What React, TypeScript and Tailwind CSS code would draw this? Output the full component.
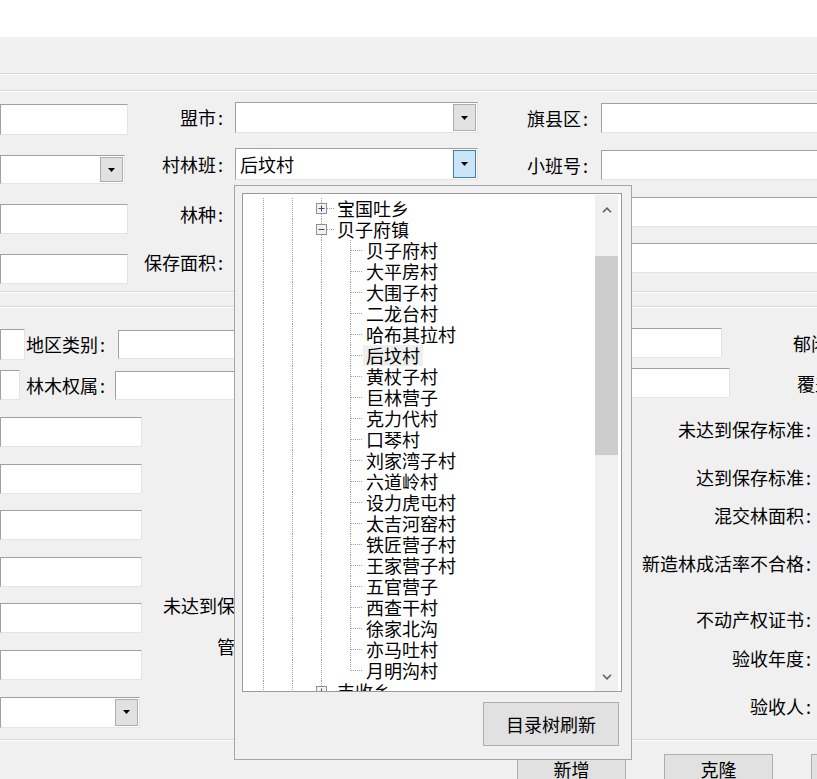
import React from 'react';

const FONT = "font-['Noto_Sans_CJK_SC','Noto_Sans',sans-serif]";

function Input({ className = '' }: { className?: string }) {
  return (
    <div
      className={`shrink-0 bg-white border border-t-[#a0a0a0] border-l-[#a0a0a0] border-r-[#e4e4e4] border-b-[#e4e4e4] ${className}`}
    />
  );
}

function Arrow() {
  return (
    <svg width="7" height="4" viewBox="0 0 7 4" className="block">
      <path d="M0 0H7L3.5 4Z" fill="#000" />
    </svg>
  );
}

function Combo({ className = '', text = '', active = false }: { className?: string; text?: string; active?: boolean }) {
  return (
    <div
      className={`shrink-0 flex items-stretch bg-white border border-t-[#a0a0a0] border-l-[#a0a0a0] border-r-[#e4e4e4] border-b-[#e4e4e4] ${className}`}
    >
      <div className="flex-1 flex items-center pl-[4px] whitespace-nowrap overflow-hidden">{text}</div>
      <div
        className={`w-[23px] my-[1px] mr-[1px] flex items-center justify-center border ${
          active ? 'bg-[#cce4f7] border-[#3c7fb1]' : 'bg-[#e1e1e1] border-[#adadad]'
        }`}
      >
        <Arrow />
      </div>
    </div>
  );
}

function Label({ className = '', t = '' }: { className?: string; t?: string }) {
  const hasColon = t.endsWith(':');
  return (
    <div className={`shrink-0 whitespace-nowrap leading-[21px] ${className}`}>
      {hasColon ? t.slice(0, -1) : t}
      {hasColon && <span className="ml-[2px]">:</span>}
    </div>
  );
}

function Sep() {
  return <div className="h-[2px] border-t border-t-[#d9d9d9] border-b border-b-white" />;
}

function Btn({ className = '', children }: { className?: string; children?: React.ReactNode }) {
  return (
    <div
      className={`shrink-0 flex items-center justify-center bg-[#e1e1e1] border border-[#adadad] whitespace-nowrap ${className}`}
    >
      {children}
    </div>
  );
}

function Guide() {
  return (
    <svg width="29" height="21" className="block shrink-0">
      <line x1="20.5" y1="0" x2="20.5" y2="21" stroke="#a0a0a0" strokeDasharray="1 1" />
    </svg>
  );
}

type Kind = 'plus' | 'minus' | 'leaf';

function Own({ kind, last }: { kind: Kind; last?: boolean }) {
  return (
    <svg width="36" height="21" className="block shrink-0">
      <line x1="20.5" y1="0" x2="20.5" y2={last ? 10.5 : 21} stroke="#a0a0a0" strokeDasharray="1 1" />
      <line
        x1={kind === 'leaf' ? 21 : 26}
        y1="10.5"
        x2="33"
        y2="10.5"
        stroke="#a0a0a0"
        strokeDasharray="1 1"
      />
      {kind !== 'leaf' && (
        <g>
          <rect x="15.5" y="5.5" width="10" height="10" fill="#f2f2f2" stroke="#919191" />
          <line x1="17.5" y1="10.5" x2="23.5" y2="10.5" stroke="#2d4f9a" />
          {kind === 'plus' && <line x1="20.5" y1="7.5" x2="20.5" y2="13.5" stroke="#2d4f9a" />}
        </g>
      )}
    </svg>
  );
}

type Row = { t: string; lv: number; k: Kind; last?: boolean; sel?: boolean };

const villages = [
  '贝子府村',
  '大平房村',
  '大围子村',
  '二龙台村',
  '哈布其拉村',
  '后坟村',
  '黄杖子村',
  '巨林营子',
  '克力代村',
  '口琴村',
  '刘家湾子村',
  '六道岭村',
  '设力虎屯村',
  '太吉河窑村',
  '铁匠营子村',
  '王家营子村',
  '五官营子',
  '西查干村',
  '徐家北沟',
  '亦马吐村',
  '月明沟村',
];

const rows: Row[] = [
  { t: '宝国吐乡', lv: 2, k: 'plus' },
  { t: '贝子府镇', lv: 2, k: 'minus' },
  ...villages.map((v, i) => ({
    t: v,
    lv: 3,
    k: 'leaf' as Kind,
    last: i === villages.length - 1,
    sel: v === '后坟村',
  })),
  { t: '丰收乡', lv: 2, k: 'plus' },
];

function Chevron({ up }: { up?: boolean }) {
  return (
    <svg width="10" height="6" viewBox="0 0 10 6" className="block">
      <path
        d={up ? 'M1 5.2L5 1.2L9 5.2' : 'M1 0.8L5 4.8L9 0.8'}
        stroke="#606060"
        strokeWidth="1.6"
        fill="none"
      />
    </svg>
  );
}

function Popup() {
  return (
    <div className="absolute left-[234px] top-[185px] w-[398px] h-[575px] border border-[#a6a6a6] bg-[#f0f0f0] flex flex-col">
      <div className="mt-[7px] ml-[7px] w-[380px] h-[499px] shrink-0 border border-[#9a9a9a] bg-white flex overflow-hidden">
        <div className="flex-1 overflow-hidden pt-[3.5px]">
          {rows.map((r, i) => (
            <div key={i} className="flex h-[21px] items-center">
              {Array.from({ length: r.lv }).map((_, j) => (
                <Guide key={j} />
              ))}
              <Own kind={r.k} last={r.last} />
              <span
                className={`whitespace-nowrap leading-[21px] ${
                  r.sel ? 'bg-[#efefef] -ml-[3px] px-[3px]' : ''
                }`}
              >
                {r.t}
              </span>
            </div>
          ))}
        </div>
        <div className="w-[23px] shrink-0 mr-[3px] mt-[1px] bg-[#f0f0f0] flex flex-col">
          <div className="h-[30px] flex items-center justify-center">
            <Chevron up />
          </div>
          <div className="h-[31px]" />
          <div className="h-[199px] bg-[#cdcdcd]" />
          <div className="flex-1" />
          <div className="h-[28px] flex items-center justify-center">
            <Chevron />
          </div>
        </div>
      </div>
      <Btn className="self-end mt-[10px] mr-[12px] w-[136px] h-[44px]">目录树刷新</Btn>
    </div>
  );
}

export default function App() {
  return (
    <div
      className={`relative w-[817px] h-[779px] overflow-hidden bg-[#f0f0f0] text-black text-[18px] leading-[21px] ${FONT}`}
    >
      <div className="h-[37px] bg-white" />
      <div className="h-[36px]" />
      <Sep />
      <div className="h-[15px]" />
      <Sep />

      {/* section 1 */}
      <div className="flex h-[199px]">
        <div className="w-[128px] shrink-0 flex flex-col pt-[12px] gap-[20px]">
          <Input className="w-[128px] h-[31px]" />
          <Combo className="w-[125px] h-[29px]" />
          <Input className="w-[128px] h-[30px]" />
          <Input className="w-[128px] h-[30px]" />
        </div>
        <div className="w-[349px] shrink-0 flex flex-col">
          <div className="mt-[10px] h-[31px] flex items-center">
            <Label className="w-[95px] text-right" t="盟市:" />
            <Combo className="ml-[12px] w-[243px] h-full" />
          </div>
          <div className="mt-[15px] h-[32px] flex items-center">
            <Label className="w-[95px] text-right" t="村林班:" />
            <Combo className="ml-[12px] w-[243px] h-full" text="后坟村" active />
          </div>
          <div className="mt-[19px] h-[30px] flex items-center">
            <Label className="w-[95px] text-right" t="林种:" />
            <Combo className="ml-[12px] w-[243px] h-full" />
          </div>
          <div className="mt-[18px] h-[30px] flex items-center">
            <Label className="w-[95px] text-right" t="保存面积:" />
            <Input className="ml-[12px] w-[243px] h-full" />
          </div>
        </div>
        <div className="flex-1 min-w-0 flex flex-col">
          <div className="mt-[11px] h-[30px] flex items-center">
            <Label className="w-[111px] text-right" t="旗县区:" />
            <Input className="ml-[13px] w-[300px] h-full" />
          </div>
          <div className="mt-[17px] h-[30px] flex items-center">
            <Label className="w-[111px] text-right" t="小班号:" />
            <Input className="ml-[13px] w-[300px] h-full" />
          </div>
          <div className="mt-[17px] h-[30px] flex items-center">
            <Label className="w-[111px] text-right" />
            <Input className="ml-[13px] w-[300px] h-full" />
          </div>
          <div className="mt-[16px] h-[30px] flex items-center">
            <Label className="w-[111px] text-right" />
            <Input className="ml-[13px] w-[300px] h-full" />
          </div>
        </div>
      </div>

      <Sep />
      <div className="h-[13px]" />
      <Sep />

      {/* section 2 */}
      <div className="flex h-[431px]">
        <div className="w-[142px] shrink-0 flex flex-col pt-[21px]">
          <div className="w-[260px] h-[31px] flex items-center">
            <Input className="w-[25px] h-full" />
            <Label className="ml-[1px] w-[80px]" t="地区类别:" />
            <Input className="ml-[12px] w-[200px] h-[29px]" />
          </div>
          <div className="mt-[10px] w-[260px] h-[30px] flex items-center">
            <Input className="w-[20px] h-full" />
            <Label className="ml-[6px] w-[80px]" t="林木权属:" />
            <Input className="ml-[9px] w-[200px] h-[29px]" />
          </div>
          <div className="mt-[17px] flex flex-col gap-[16.6px]">
            <Input className="w-[142px] h-[30px]" />
            <Input className="w-[142px] h-[30px]" />
            <Input className="w-[142px] h-[30px]" />
            <Input className="w-[142px] h-[30px]" />
            <Input className="w-[142px] h-[30px]" />
            <Input className="w-[142px] h-[30px]" />
            <Combo className="w-[140px] h-[31px]" />
          </div>
        </div>
        <div className="w-[154px] shrink-0 flex flex-col items-end pt-[286.5px]">
          <Label t="未达到保存标准:" />
          <Label className="mt-[20px]" t="管护单位:" />
        </div>
        <div className="flex-1 min-w-0 flex flex-col">
          <div className="mt-[20px] h-[30px] flex items-center">
            <Input className="ml-[264px] w-[162px] h-full" />
            <Label className="ml-[71px]" t="郁闭度:" />
          </div>
          <div className="mt-[10px] h-[30px] flex items-center">
            <Input className="ml-[264px] w-[170px] h-full" />
            <Label className="ml-[67px]" t="覆盖度:" />
          </div>
          <div className="flex flex-col items-end pr-[6px]">
            <Label className="mt-[20.5px]" t="未达到保存标准:" />
            <Label className="mt-[27px]" t="达到保存标准:" />
            <Label className="mt-[17px]" t="混交林面积:" />
            <Label className="mt-[27px]" t="新造林成活率不合格:" />
            <Label className="mt-[35px]" t="不动产权证书:" />
            <Label className="mt-[18px]" t="验收年度:" />
            <Label className="mt-[27px]" t="验收人:" />
          </div>
        </div>
      </div>

      <Sep />
      <div className="flex pt-[13px] pl-[517px] gap-[38px]">
        <Btn className="w-[109px] h-[30px]">新增</Btn>
        <Btn className="w-[109px] h-[30px]">克隆</Btn>
        <Btn className="w-[109px] h-[30px]">保存</Btn>
      </div>

      <Popup />
    </div>
  );
}
